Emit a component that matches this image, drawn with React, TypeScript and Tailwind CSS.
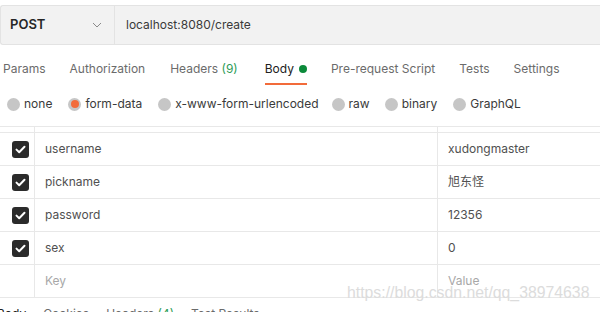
import React from "react";

const font = { fontFamily: "Inter, 'Noto Sans CJK SC', sans-serif" };

function Check() {
  return (
    <div className="w-[17px] h-[17px] rounded-[3px] bg-[#2b2b2b] flex items-center justify-center">
      <svg width="11" height="9" viewBox="0 0 11 9">
        <path d="M1.5 4.6 L4.2 7.2 L9.5 1.8" fill="none" stroke="#fff" strokeWidth="2" strokeLinecap="round" strokeLinejoin="round" />
      </svg>
    </div>
  );
}

function Radio({ label, selected, ml }: { label: string; selected?: boolean; ml: string }) {
  return (
    <div className={`flex items-center ${ml}`}>
      {selected ? (
        <div className="w-[13px] h-[13px] rounded-full bg-[#c6c6c6] flex items-center justify-center">
          <div className="w-[8px] h-[8px] rounded-full bg-[#f26b3a]" />
        </div>
      ) : (
        <div className="w-[13px] h-[13px] rounded-full bg-[#c6c6c6]" />
      )}
      <span className="ml-[4px] text-[12px] text-[#3a3a3a]">{label}</span>
    </div>
  );
}

const rows: [string, string][] = [
  ["username", "xudongmaster"],
  ["pickname", "旭东怪"],
  ["password", "12356"],
  ["sex", "0"],
];

export default function App() {
  return (
    <div className="relative w-[600px] h-[312px] bg-white overflow-hidden" style={font}>
      {/* URL bar */}
      <div className="mt-[5px] h-[40px] flex bg-[#f2f2f2] border-y border-l border-[#e3e3e3] rounded-l-[3px]">
        <div className="w-[114px] flex items-center pl-[9px] border-r border-[#e3e3e3]">
          <span className="text-[13px] font-semibold text-[#262626]">POST</span>
          <svg className="ml-[47px]" width="10" height="6" viewBox="0 0 10 6">
            <path d="M1 1 L5 5 L9 1" fill="none" stroke="#8a8a8a" strokeWidth="1" />
          </svg>
        </div>
        <div className="flex items-center pl-[11px] text-[12px] text-[#3a3a3a]">localhost:8080/create</div>
      </div>

      {/* Tabs */}
      <div className="mt-[16px] h-[25px] flex text-[12px] leading-[16px] text-[#6b6b6b]">
        <span className="ml-[3px]">Params</span>
        <span className="ml-[24px]">Authorization</span>
        <span className="ml-[25px]">
          Headers <span className="text-[#2e9c57]">(9)</span>
        </span>
        <div className="ml-[27px] flex flex-col">
          <div className="flex items-center text-[#212121]">
            Body
            <span className="ml-[5px] w-[8px] h-[8px] rounded-full bg-[#0b8a3a]" />
          </div>
          <div className="mt-[6px] h-[2px] w-[42px] bg-[#f26b3a]" />
        </div>
        <span className="ml-[24px]">Pre-request Script</span>
        <span className="ml-[24px]">Tests</span>
        <span className="ml-[24px]">Settings</span>
      </div>

      {/* Radios */}
      <div className="mt-[8px] h-[20px] flex items-center">
        <Radio label="none" ml="ml-[7px]" />
        <Radio label="form-data" ml="ml-[16px]" selected />
        <Radio label="x-www-form-urlencoded" ml="ml-[16px]" />
        <Radio label="raw" ml="ml-[13px]" />
        <Radio label="binary" ml="ml-[15px]" />
        <Radio label="GraphQL" ml="ml-[16px]" />
      </div>

      {/* Table */}
      <div className="mt-[12px] border-t border-[#e8e8e8] text-[12px]">
        <div className="h-[6px] flex border-b border-[#e8e8e8]">
          <div className="w-[35px] border-r border-[#e8e8e8]" />
          <div className="w-[403px] border-r border-[#e8e8e8]" />
        </div>
        {rows.map(([k, v]) => (
          <div key={k} className="h-[33px] flex border-b border-[#e8e8e8]">
            <div className="w-[35px] border-r border-[#e8e8e8] flex items-center justify-end pr-[5px]">
              <Check />
            </div>
            <div className="w-[403px] border-r border-[#e8e8e8] flex items-center pl-[10px] text-[#505050]">{k}</div>
            <div className="flex items-center pl-[10px] text-[#505050]">{v}</div>
          </div>
        ))}
        <div className="h-[33px] flex border-b border-[#e8e8e8]">
          <div className="w-[35px] border-r border-[#e8e8e8]" />
          <div className="w-[403px] border-r border-[#e8e8e8] flex items-center pl-[10px] text-[#a8a8a8]">Key</div>
          <div className="flex items-center pl-[10px] text-[#a8a8a8]">Value</div>
        </div>
      </div>

      {/* Bottom tabs (cut off by the window edge) */}
      <div className="mt-[8px] flex text-[12px] leading-[16px] text-[#6b6b6b]">
        <span className="ml-[-3px] text-[#212121]">Body</span>
        <span className="ml-[17px]">Cookies</span>
        <span className="ml-[17px]">
          Headers <span className="text-[#2e9c57]">(4)</span>
        </span>
        <span className="ml-[17px]">Test Results</span>
      </div>

      {/* Watermark */}
      <div
        className="absolute left-[347px] top-[284px] text-[15.8px] leading-[18px] text-[#dcdcdc]"
        style={{ fontFamily: "'Liberation Sans', Arial, sans-serif" }}
      >
        https://blog.csdn.net/qq_38974638
      </div>
    </div>
  );
}
